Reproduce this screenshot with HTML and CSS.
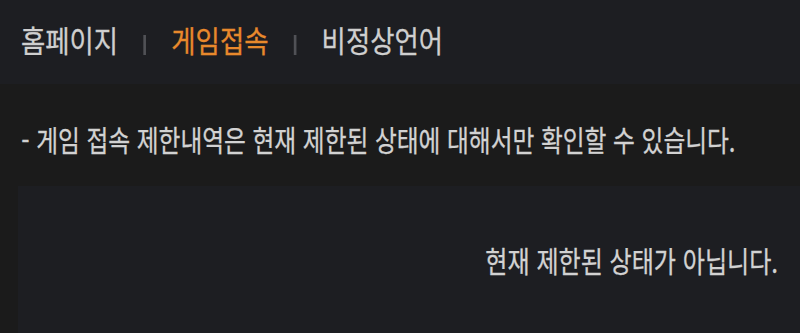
FILE: index.html
```html
<!DOCTYPE html>
<html lang="ko">
<head>
<meta charset="utf-8">
<link rel="stylesheet" href="styles.css">
</head>
<body>
<nav class="tabs">
  <div class="tabs-row">
    <a class="tab">홈페이지</a>
    <span class="sep"></span>
    <a class="tab active">게임접속</a>
    <span class="sep"></span>
    <a class="tab">비정상언어</a>
  </div>
</nav>
<main class="content">
  <p class="notice">- 게임 접속 제한내역은 현재 제한된 상태에 대해서만 확인할 수 있습니다.</p>
  <section class="panel">
    <p class="status">현재 제한된 상태가 아닙니다.</p>
  </section>
</main>
</body>
</html>
```
FILE: styles.css
```css
html, body {
  margin: 0;
  padding: 0;
  background: #1b1b1b;
  font-family: "Noto Sans CJK KR", "Noto Sans", sans-serif;
  color: #d2d2d2;
  -webkit-text-stroke: 0.3px currentColor;
}
.tabs {
  height: 84px;
  background: #1d1e22;
  display: flex;
  align-items: center;
  padding: 0 0 6px 21px;
  box-sizing: border-box;
}
.tabs-row {
  display: flex;
  align-items: center;
  white-space: nowrap;
  transform: scaleX(0.88);
  transform-origin: left center;
}
.tab {
  font-size: 30px;
  line-height: 40px;
  color: #cfcfcf;
}
.tab.active {
  color: #e8892c;
}
.sep {
  width: 2.4px;
  height: 20px;
  background: #505156;
  margin: 12px 29px 0 29px;
}
.content {
  padding-left: 18px;
}
.notice {
  margin: 0;
  box-sizing: border-box;
  height: 102px;
  padding: 38px 0 0 4px;
  font-size: 29px;
  line-height: 34px;
  white-space: nowrap;
  transform: scaleX(0.818);
  transform-origin: left center;
}
.panel {
  background: #1d1e22;
  height: 147px;
  display: flex;
  justify-content: flex-end;
}
.status {
  margin: 0;
  padding: 57px 26px 0 0;
  font-size: 29px;
  line-height: 34px;
  white-space: nowrap;
  transform: scaleX(0.83);
  transform-origin: right center;
}
```
